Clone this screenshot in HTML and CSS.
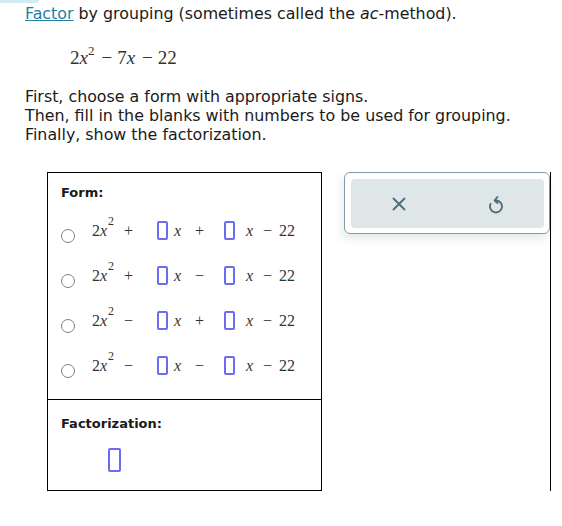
FILE: index.html
```html
<!DOCTYPE html>
<html lang="en">

<head>
    <title>Factor by grouping</title>
    <meta charset="utf-8">
    <meta name="viewport" content="width=device-width, initial-scale=1.0">
    <link rel="stylesheet" href="styles.css">
</head>

<body>

    <div class="focusbar"></div>

    <div class="question">
        <p class="lead"><a href="#" class="term">Factor</a> by grouping (sometimes called the <i>ac</i>-method).</p>
        <div class="expr">2<i>x</i><sup>2</sup><span class="op">&minus;</span>7<i>x</i><span class="op">&minus;</span>22</div>
        <p class="steps">First, choose a form with appropriate signs.<br>
            Then, fill in the blanks with numbers to be used for grouping.<br>
            Finally, show the factorization.</p>
    </div>

    <main class="workarea">
        <div class="answer">
            <section class="form">
                <h3>Form:</h3>
                <label class="choice">
                    <input type="radio" name="form">
                    <span class="lead-term">2<i>x</i><sup>2</sup></span>
                    <span class="sign">+</span>
                    <span class="blank"></span>
                    <i class="var">x</i>
                    <span class="sign">+</span>
                    <span class="blank"></span>
                    <i class="var">x</i>
                    <span class="sign">&minus;</span>
                    <span class="num">22</span>
                </label>
                <label class="choice">
                    <input type="radio" name="form">
                    <span class="lead-term">2<i>x</i><sup>2</sup></span>
                    <span class="sign">+</span>
                    <span class="blank"></span>
                    <i class="var">x</i>
                    <span class="sign">&minus;</span>
                    <span class="blank"></span>
                    <i class="var">x</i>
                    <span class="sign">&minus;</span>
                    <span class="num">22</span>
                </label>
                <label class="choice">
                    <input type="radio" name="form">
                    <span class="lead-term">2<i>x</i><sup>2</sup></span>
                    <span class="sign">&minus;</span>
                    <span class="blank"></span>
                    <i class="var">x</i>
                    <span class="sign">+</span>
                    <span class="blank"></span>
                    <i class="var">x</i>
                    <span class="sign">&minus;</span>
                    <span class="num">22</span>
                </label>
                <label class="choice">
                    <input type="radio" name="form">
                    <span class="lead-term">2<i>x</i><sup>2</sup></span>
                    <span class="sign">&minus;</span>
                    <span class="blank"></span>
                    <i class="var">x</i>
                    <span class="sign">&minus;</span>
                    <span class="blank"></span>
                    <i class="var">x</i>
                    <span class="sign">&minus;</span>
                    <span class="num">22</span>
                </label>
            </section>

            <section class="factor">
                <h3>Factorization:</h3>
                <span class="blank big"></span>
            </section>
        </div>

        <aside class="side">
            <div class="tools">
                <div class="tools-inner">
                    <button class="tool" title="Clear">
                        <svg width="16" height="16" viewBox="0 0 16 16">
                            <path d="M2.5 2.5 L13.5 13.5 M13.5 2.5 L2.5 13.5" />
                        </svg>
                    </button>
                    <button class="tool" title="Reset">
                        <svg width="18" height="20" viewBox="0 0 18 20">
                            <path d="M9 6.5 A6 6 0 1 1 3.6 9.9" />
                            <path d="M10.5 3 L7.5 6.5 L10.5 9" />
                        </svg>
                    </button>
                </div>
            </div>
        </aside>
    </main>

</body>

</html>
```

FILE: styles.css
```css
body {
    margin: 0;
    background-color: #ffffff;
    color: #1a1a1a;
    font-family: "DejaVu Sans", Verdana, sans-serif;
    font-size: 15.85px;
}

.focusbar {
    position: absolute;
    left: 0;
    top: 0;
    width: 39px;
    height: 3px;
    border-radius: 0 0 3px 0;
    background-color: #d3ecf3;
}

.question {
    padding: 4px 25px 0 25px;
}

.lead {
    margin: 0;
    line-height: 19px;
}

.term {
    color: #1f7fa3;
    text-decoration: underline;
}

.expr {
    margin: 23px 0 0 45px;
    font-family: "Liberation Serif", "Times New Roman", serif;
    font-size: 19px;
    line-height: 24px;
    color: #333333;
}

.expr sup {
    font-size: 13px;
    vertical-align: 9px;
    line-height: 0;
}

.expr .op {
    margin: 0 5px 0 7px;
}

.steps {
    margin: 17px 0 0 0;
    line-height: 19px;
}

.workarea {
    display: flex;
    align-items: flex-start;
    gap: 22px;
    margin-top: 28px;
    padding-left: 47px;
}

.answer {
    width: 273px;
    border: 1px solid #000000;
}

.answer h3 {
    margin: 0;
    font-size: 13px;
    line-height: 19px;
    font-weight: bold;
}

.form {
    padding: 10px 13px 11px 13px;
    border-bottom: 1px solid #000000;
}

.form h3 {
    margin-bottom: 6px;
}

.choice {
    display: grid;
    grid-template-columns: 31px 32px 33px 17px 21px 29px 22px 17px 16px auto;
    align-items: center;
    height: 45px;
    color: #333333;
}

.choice span,
.choice i {
    font-family: "Liberation Serif", "Times New Roman", serif;
    font-size: 16px;
}

.choice input {
    appearance: none;
    -webkit-appearance: none;
    width: 14px;
    height: 14px;
    margin: 10px 0 0 0;
    border: 1px solid #808080;
    border-radius: 50%;
    background-color: #ffffff;
}

.choice .lead-term sup {
    font-size: 12px;
    vertical-align: 11px;
    line-height: 0;
    margin-left: 1px;
}

.choice .blank {
    display: block;
    box-sizing: border-box;
    width: 11px;
    height: 19px;
    border: 2px solid #6b6bf5;
    border-radius: 2px;
}

.factor {
    padding: 14px 13px 18px 13px;
}

.blank.big {
    display: block;
    box-sizing: border-box;
    width: 13px;
    height: 24px;
    margin: 15px 0 0 47px;
    border: 2px solid #6b6bf5;
    border-radius: 2px;
}

.side {
    width: 206px;
    height: 319px;
    border-right: 1px solid #000000;
}

.tools {
    border: 1px solid #7f9ea8;
    border-radius: 6px;
    padding: 6px 5px 5px 6px;
    box-shadow: -2px 5px 8px rgba(60, 80, 90, 0.12);
}

.tools-inner {
    display: flex;
    height: 49px;
    border-radius: 4px;
    background-color: #dfe6e7;
}

.tool {
    flex: 1;
    display: flex;
    align-items: center;
    justify-content: center;
    border: none;
    background: none;
    padding: 0;
    cursor: pointer;
}

.tool svg path {
    fill: none;
    stroke: #4a6d78;
    stroke-width: 1.8;
    stroke-linecap: round;
    stroke-linejoin: round;
}
```
